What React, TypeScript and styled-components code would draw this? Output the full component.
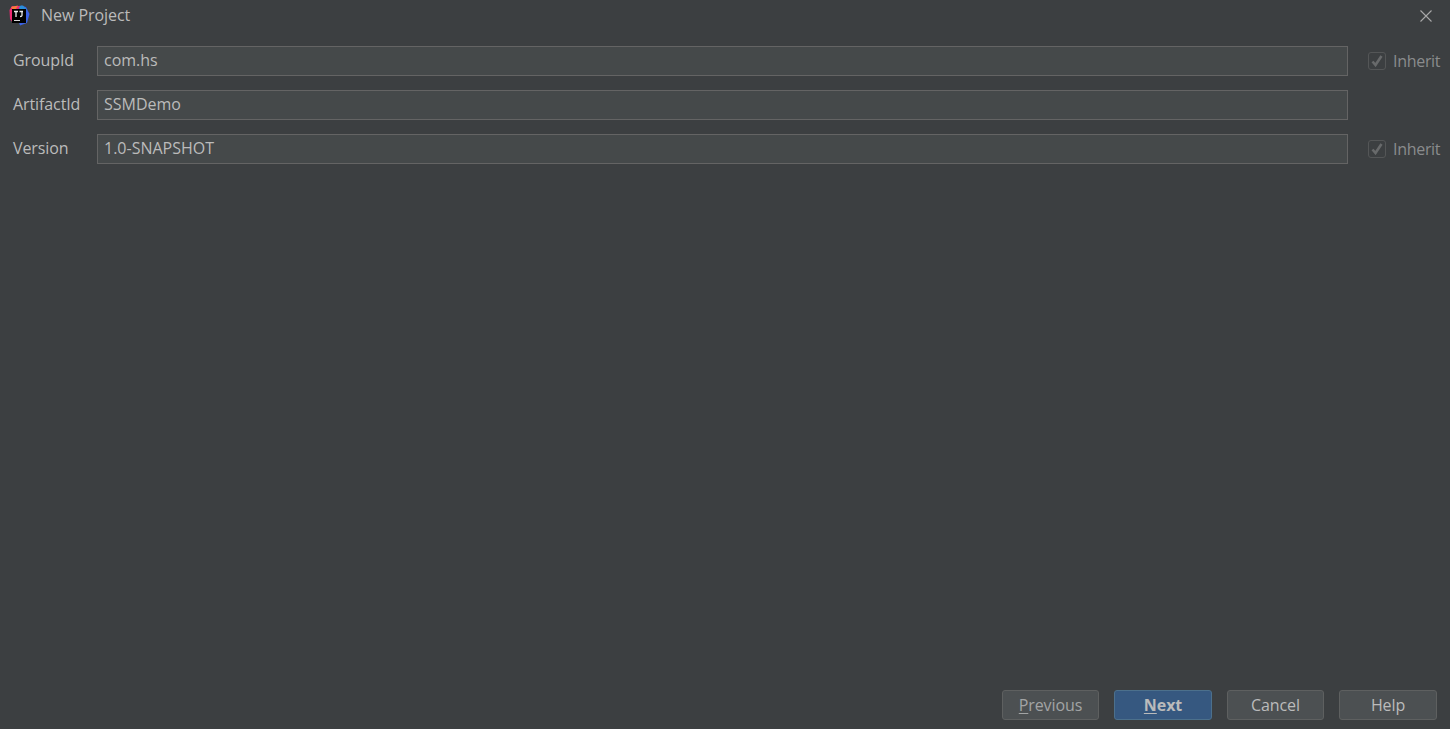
import React from "react";
import styled, { createGlobalStyle } from "styled-components";

const Global = createGlobalStyle`
  html, body { margin: 0; padding: 0; height: 100%; background: #3c3f41; }
  #root { height: 100%; }
`;

const Dialog = styled.div`
  width: 1450px;
  height: 729px;
  display: flex;
  flex-direction: column;
  background: #3c3f41;
  color: #bbbbbb;
  font-family: "Open Sans", "Noto Sans", "Liberation Sans", sans-serif;
  font-size: 16px;
  overflow: hidden;
`;

const TitleBar = styled.div`
  height: 31px;
  display: flex;
  align-items: center;
  padding: 0 18px 0 9px;
  flex: none;
`;

const TitleText = styled.span`
  margin: -2px 0 0 11px;
  flex: 1;
  letter-spacing: -0.05px;
`;

const Form = styled.div`
  flex: 1;
  display: flex;
  flex-direction: column;
  gap: 14px;
  padding-top: 15px;
`;

const Row = styled.div`
  display: grid;
  grid-template-columns: 97px 1251px 102px;
  align-items: center;
  height: 30px;
`;

const Label = styled.label`
  padding: 0 0 2px 13px;
  letter-spacing: -0.1px;
`;

const Field = styled.input`
  box-sizing: border-box;
  width: 100%;
  height: 30px;
  padding: 0 6px 2px;
  background: #45494a;
  border: 1px solid #646464;
  color: #bbbbbb;
  font: inherit;
  outline: none;
`;

const InheritBox = styled.div`
  display: flex;
  align-items: center;
  padding-left: 20px;
  gap: 7px;
  color: #8a8c8d;
  letter-spacing: -0.3px;
`;

const Check = styled.span`
  box-sizing: border-box;
  width: 18px;
  height: 18px;
  border: 1px solid #545657;
  border-radius: 3px;
  display: flex;
  align-items: center;
  justify-content: center;
  flex: none;
`;

const Footer = styled.div`
  flex: none;
  display: flex;
  justify-content: flex-end;
  gap: 15px;
  padding: 0 13px 9px 0;
`;

const Button = styled.button<{ $primary?: boolean; $dim?: boolean; $wide?: boolean }>`
  box-sizing: border-box;
  width: ${(p) => (p.$wide ? "98px" : "97px")};
  height: 30px;
  padding: 0;
  border-radius: 3px;
  border: 1px solid ${(p) => (p.$primary ? "#4c708c" : "#5e6060")};
  background: ${(p) => (p.$primary ? "#365880" : "#4c5052")};
  color: ${(p) => (p.$dim ? "#a2a4a5" : "#bbbbbb")};
  font: inherit;
  font-weight: ${(p) => (p.$primary ? 700 : 400)};
  letter-spacing: -0.1px;
`;

const Mnemonic = styled.span`
  text-decoration: underline;
  text-underline-offset: 2px;
`;

const Logo = () => (
  <svg width="21" height="21" viewBox="0 0 21 21">
    <path d="M12 0.5 L17 2 L20.5 9 L18 18 L11 20.5 L8 12 Z" fill="#3a62e6" />
    <path d="M9 1 L14 0.5 L18 5 L12 8 Z" fill="#2a8fd8" />
    <path d="M0.5 5 L3 1 L11 1 L7 10 L4 18 L1 14 Z" fill="#ee2a72" />
    <path d="M2 2 L9 0.5 L5 7 Z" fill="#f57f3a" />
    <rect x="3" y="4" width="14" height="14" fill="#000000" />
    <rect x="5" y="15" width="6" height="1" fill="#d8d8d8" />
    <path d="M5 6.5 H9 M7 6.5 V12 M10.5 6.5 H14 M13 6.5 V10.5 Q13 11.5 11 11.5" stroke="#ececec" strokeWidth="1.3" fill="none" />
  </svg>
);

const CloseIcon = () => (
  <svg width="12" height="12" viewBox="0 0 12 12">
    <path d="M0.5 0.5 L11.5 11.5 M11.5 0.5 L0.5 11.5" stroke="#a9a9a9" strokeWidth="1.1" fill="none" />
  </svg>
);

const Tick = () => (
  <svg width="12" height="12" viewBox="0 0 12 12">
    <path d="M1.5 6.5 L4.5 10 L10.5 1" stroke="#686a6b" strokeWidth="2.6" fill="none" />
  </svg>
);

const rows = [
  { label: "GroupId", value: "com.hs", inherit: true },
  { label: "ArtifactId", value: "SSMDemo", inherit: false },
  { label: "Version", value: "1.0-SNAPSHOT", inherit: true },
];

export default function App() {
  return (
    <Dialog>
      <Global />
      <TitleBar>
        <Logo />
        <TitleText>New Project</TitleText>
        <CloseIcon />
      </TitleBar>
      <Form>
        {rows.map((r) => (
          <Row key={r.label}>
            <Label>{r.label}</Label>
            <Field defaultValue={r.value} />
            {r.inherit ? (
              <InheritBox>
                <Check><Tick /></Check>
                Inherit
              </InheritBox>
            ) : (
              <span />
            )}
          </Row>
        ))}
      </Form>
      <Footer>
        <Button $dim><Mnemonic>P</Mnemonic>revious</Button>
        <Button $primary $wide><Mnemonic>N</Mnemonic>ext</Button>
        <Button>Cancel</Button>
        <Button $wide>Help</Button>
      </Footer>
    </Dialog>
  );
}
